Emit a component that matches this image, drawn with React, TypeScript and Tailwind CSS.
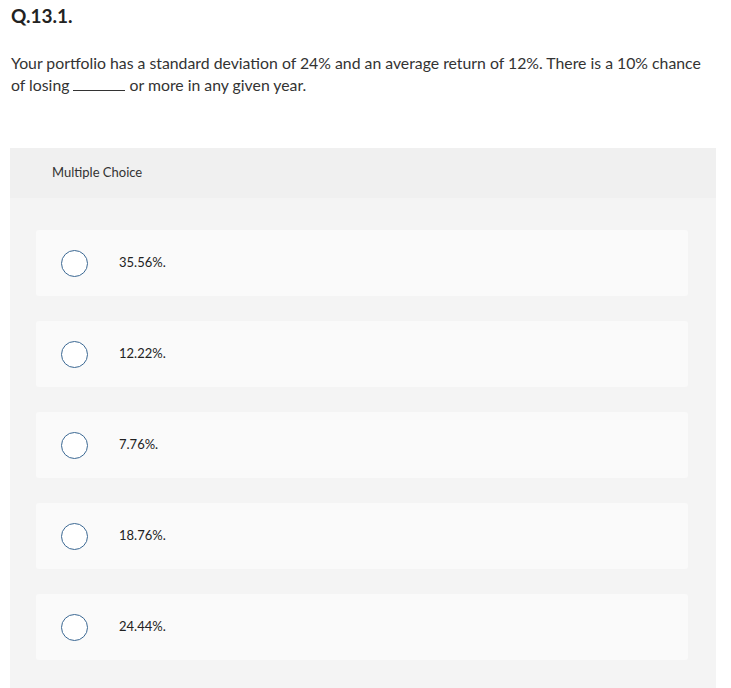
import React from "react";

const options = ["35.56%.", "12.22%.", "7.76%.", "18.76%.", "24.44%."];

export default function App() {
  return (
    <div
      className="w-[731px] h-[688px] overflow-hidden bg-white text-[#333]"
      style={{ fontFamily: "Lato, 'Liberation Sans', sans-serif" }}
    >
      <div className="pl-[11px] pt-[4px] text-[19px] font-bold leading-[24px] text-[#222]">Q.13.1.</div>
      <p className="mt-[24px] pl-[11px] pr-[16px] text-[15.8px] leading-[22px] text-[#333]">
        Your portfolio has a standard deviation of 24% and an average return of 12%. There is a 10% chance of losing{" "}
        <span className="inline-block w-[52px] border-b border-[#333] align-baseline"></span> or more in any given year.
      </p>
      <div className="ml-[10px] mt-[52px] w-[706px] bg-[#f4f4f4] pb-[40px]">
        <div className="flex h-[50px] items-center bg-[#f0f0f0] pl-[42px] text-[13px] text-[#333]">Multiple Choice</div>
        <div className="flex flex-col gap-[25px] pl-[26px] pr-[28px] pt-[32px]">
          {options.map((o) => (
            <div key={o} className="flex h-[66px] items-center rounded-[3px] bg-[#fafafa] pl-[25px]">
              <span className="h-[27px] w-[27px] rounded-full border-[1.5px] border-[#3b6893] bg-white"></span>
              <span className="ml-[31px] text-[13px] text-[#222]">{o}</span>
            </div>
          ))}
        </div>
      </div>
    </div>
  );
}
